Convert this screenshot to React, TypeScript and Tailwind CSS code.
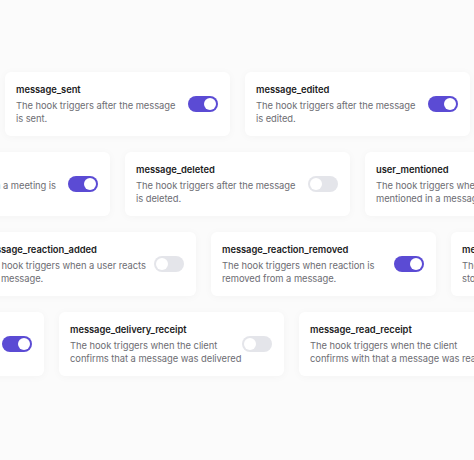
type Hook = {
  name: string
  lines: [string, string]
  on: boolean
}

const rows: { offset: string; hooks: Hook[] }[] = [
  {
    offset: 'ml-[5px]',
    hooks: [
      { name: 'message_sent', lines: ['The hook triggers after the message', 'is sent.'], on: true },
      { name: 'message_edited', lines: ['The hook triggers after the message', 'is edited.'], on: true },
    ],
  },
  {
    offset: 'ml-[-115px]',
    hooks: [
      { name: 'meeting_started', lines: ['The hook triggers when a meeting is', 'started.'], on: true },
      { name: 'message_deleted', lines: ['The hook triggers after the message', 'is deleted.'], on: false },
      { name: 'user_mentioned', lines: ['The hook triggers when a user is', 'mentioned in a message.'], on: true },
    ],
  },
  {
    offset: 'ml-[-29px]',
    hooks: [
      { name: 'message_reaction_added', lines: ['The hook triggers when a user reacts', 'to a message.'], on: false },
      { name: 'message_reaction_removed', lines: ['The hook triggers when reaction is', 'removed from a message.'], on: true },
      { name: 'message_stored', lines: ['The hook triggers when a message is', 'stored.'], on: false },
    ],
  },
  {
    offset: 'ml-[-181px]',
    hooks: [
      { name: 'message_sent', lines: ['The hook triggers after the message', 'is sent.'], on: true },
      { name: 'message_delivery_receipt', lines: ['The hook triggers when the client', 'confirms that a message was delivered'], on: false },
      { name: 'message_read_receipt', lines: ['The hook triggers when the client', 'confirms with that a message was read'], on: true },
    ],
  },
]

function Toggle({ on }: { on: boolean }) {
  return (
    <div
      className={
        on
          ? 'w-[30px] h-[16px] rounded-full bg-[#5b4bd4] flex items-center justify-end px-[2px] shrink-0'
          : 'w-[30px] h-[16px] rounded-full bg-[#e4e5ea] flex items-center justify-start px-[2px] shrink-0'
      }
    >
      <div className="w-[12px] h-[12px] rounded-full bg-white" />
    </div>
  )
}

function HookCard({ hook }: { hook: Hook }) {
  return (
    <div className="w-[225px] h-[64px] shrink-0 bg-white rounded-md shadow-[0_1px_8px_rgba(0,0,0,0.035)] pl-[11px] pr-[12px] flex items-center justify-between">
      <div className="whitespace-nowrap tracking-[-0.05px]">
        <div className="text-[9.4px] leading-[14px] font-semibold text-[#1c1c22]">{hook.name}</div>
        <div className="mt-[2px] text-[9.4px] leading-[13px] text-[#6d6d73]">
          {hook.lines[0]}
          <br />
          {hook.lines[1]}
        </div>
      </div>
      <Toggle on={hook.on} />
    </div>
  )
}

export default function App() {
  return (
    <div
      className="w-[474px] h-[460px] overflow-hidden bg-[#fbfbfb] pt-[72px] flex flex-col gap-[16px]"
      style={{ fontFamily: 'Inter, "Noto Sans", sans-serif' }}
    >
      {rows.map((row, i) => (
        <div key={i} className={`flex gap-[15px] ${row.offset}`}>
          {row.hooks.map((h, j) => (
            <HookCard key={j} hook={h} />
          ))}
        </div>
      ))}
    </div>
  )
}
